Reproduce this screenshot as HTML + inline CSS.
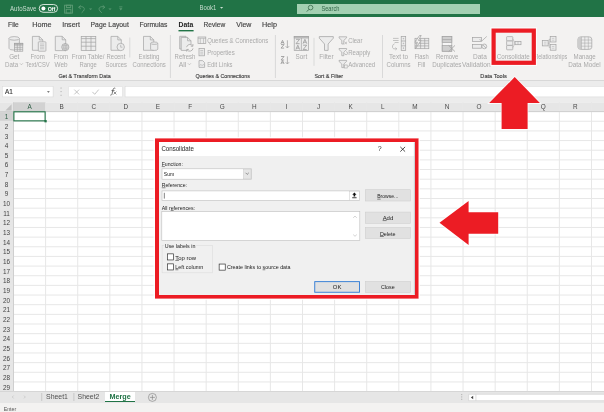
<!DOCTYPE html>
<html><head><meta charset="utf-8"><style>
html,body{margin:0;padding:0;width:604px;height:412px;overflow:hidden;background:#fff}
#w{position:absolute;left:0;top:0;width:604px;height:412px;overflow:hidden;will-change:transform;filter:blur(0.3px);font-family:"Liberation Sans", sans-serif}
.ov{position:absolute;left:0;top:0;overflow:visible}
</style></head><body><div id="w">
<div style="position:absolute;left:0px;top:0px;width:604px;height:17px;background:#217346"></div>
<div style="position:absolute;left:297.4px;top:3.5px;width:183px;height:10.5px;background:#a3d0b2"></div>
<svg class="ov" width="604" height="412" viewBox="0 0 604 412"><text x="10.00" y="10.96" font-family="Liberation Sans" font-size="6.6" fill="#c9ddd0" textLength="26.39" lengthAdjust="spacingAndGlyphs">AutoSave</text><rect x="39.2" y="4.5" width="18.4" height="7.8" rx="3.9" fill="none" stroke="#e6efe9" stroke-width="0.9"/><circle cx="43.4" cy="8.4" r="2" fill="#fff"/><text x="47.66" y="10.50" font-family="Liberation Sans" font-size="5.6" fill="#fff" font-weight="bold" textLength="7.67" lengthAdjust="spacingAndGlyphs">Off</text><g fill="none" stroke="#5c9a74" stroke-width="0.9"><rect x="64.6" y="5.2" width="7.9" height="7.9"/><rect x="66.4" y="5.2" width="4.3" height="2.3"/><rect x="66.2" y="9.3" width="4.7" height="3.8"/><path d="M78.8 7.2 C 82.5 5.4, 87.5 8.2, 81.6 12.8"/><path d="M80.6 5.4 L78.6 7.3 L80.8 8.9"/><path d="M104.6 7.2 C 100.9 5.4, 95.9 8.2, 101.8 12.8"/><path d="M102.8 5.4 L104.8 7.3 L102.6 8.9"/></g><g fill="#5c9a74"><path d="M89 8.6 h3.2 l-1.6 1.5z"/><path d="M108.4 8.6 h3.2 l-1.6 1.5z"/><path d="M119.2 8.2 h3.2 l-1.6 2.2z"/><rect x="119.2" y="6.5" width="3.2" height="0.8"/></g><text x="199.50" y="10.16" font-family="Liberation Sans" font-size="6.6" fill="#c9ddd0" textLength="16.89" lengthAdjust="spacingAndGlyphs">Book1</text><path d="M220 7 h3.2 l-1.6 1.8z" fill="#c9ddd0"/><circle cx="310.6" cy="7.6" r="2.3" fill="none" stroke="#3b6b4c" stroke-width="0.8"/><path d="M309 9.3 L306.8 11.6" stroke="#3b6b4c" stroke-width="0.9"/><text x="321.40" y="11.26" font-family="Liberation Sans" font-size="6.6" fill="#33684a" textLength="17.99" lengthAdjust="spacingAndGlyphs">Search</text></svg>
<div style="position:absolute;left:0px;top:17px;width:604px;height:63px;background:#f3f2f1"></div>
<svg style="position:absolute;left:0;top:0" width="604" height="100" viewBox="0 0 604 100"><g fill="#ececec" stroke="#a3a3a3" stroke-width="0.7"><path d="M9 38.4 V48.3 A5.2 1.8 0 0 0 19.4 48.3 V38.4"/><ellipse cx="14.2" cy="38.4" rx="5.2" ry="1.8"/></g><g stroke="#a3a3a3" stroke-width="0.7"><rect x="14.5" y="43.3" width="8.3" height="7.9" fill="#ececec"/><rect x="14.5" y="43.3" width="8.3" height="1.8" fill="#c4c4c4"/><path d="M17.3 43.3 V51.2 M20 43.3 V51.2 M14.5 47.3 H22.8 M14.5 49.3 H22.8" fill="none"/></g><g fill="#ececec" stroke="#a3a3a3" stroke-width="0.7"><path d="M32.4 36.4 H39.3 L42.8 39.9 V50.3 H32.4 Z"/><path d="M39.3 36.4 V39.9 H42.8" fill="none"/><rect x="38.3" y="41.8" width="7.6" height="9.4" rx="0.6"/><path d="M40 44 H44.2 M40 45.6 H44.2 M40 47.2 H44.2 M40 48.8 H44.2" fill="none" stroke-width="0.5"/></g><g fill="#ececec" stroke="#a3a3a3" stroke-width="0.7"><path d="M55.3 36.3 H62.2 L65.7 39.8 V50.6 H55.3 Z"/><path d="M62.2 36.3 V39.8 H65.7" fill="none"/><circle cx="65.3" cy="47.1" r="3.6"/><path d="M61.7 47.1 H68.9 M65.3 43.5 V50.7 M62.2 45.4 H68.4 M62.2 48.8 H68.4" fill="none" stroke-width="0.5"/><ellipse cx="65.3" cy="47.1" rx="1.6" ry="3.6" fill="none" stroke-width="0.5"/></g><g stroke="#a3a3a3" stroke-width="0.7" fill="none"><rect x="81.2" y="36.4" width="14.6" height="14.2" fill="#ececec"/><path d="M81.2 38.6 H95.8 M81.2 42.2 H95.8 M81.2 46.2 H95.8 M86 36.4 V50.6 M91 36.4 V50.6"/></g><g fill="#ececec" stroke="#a3a3a3" stroke-width="0.7"><path d="M111 36.4 H117.8 L121.3 39.9 V50.3 H111 Z"/><path d="M117.8 36.4 V39.9 H121.3" fill="none"/><circle cx="120.7" cy="47" r="3.7"/><path d="M120.7 44.8 V47.2 H122.5" fill="none" stroke-width="0.6"/></g><g fill="#ececec" stroke="#a3a3a3" stroke-width="0.7"><path d="M143.5 36.4 H150.3 L153.8 39.9 V50.3 H143.5 Z"/><path d="M150.3 36.4 V39.9 H153.8" fill="none"/><path d="M150.6 43.2 V49.2 A3.6 1.2 0 0 0 157.8 49.2 V43.2"/><ellipse cx="154.2" cy="43.2" rx="3.6" ry="1.2"/></g><g fill="#ececec" stroke="#a3a3a3" stroke-width="0.7"><path d="M179.7 36.3 H186 V49 H179.7 Z" fill="#e2e2e2"/><path d="M181.2 37.4 H187.6 L191 40.8 V50.4 H181.2 Z"/><path d="M187.6 37.4 V40.8 H191" fill="none"/></g><circle cx="189.8" cy="47.8" r="3.9" fill="#f3f2f1"/><g fill="none" stroke="#a3a3a3" stroke-width="0.8"><path d="M186.6 47.2 A3.3 3.3 0 0 1 192.6 45.9"/><path d="M193 48.4 A3.3 3.3 0 0 1 187 49.7"/><path d="M192.9 44 V46.2 H190.8"/><path d="M186.7 51.6 V49.4 H188.8"/></g><g fill="#ececec" stroke="#a3a3a3" stroke-width="0.7"><rect x="198" y="37" width="7.8" height="6.4"/><path d="M198 38.4 H205.8 M200.3 38.4 V43.4 M203.5 38.4 V43.4" fill="none" stroke-width="0.5"/><rect x="199" y="48.4" width="5.5" height="7.4"/><path d="M200.3 50.5 H203.2 M200.3 52.2 H203.2 M200.3 53.9 H203.2" fill="none" stroke-width="0.5"/><path d="M199 60.6 H202.6 L204.6 62.6 V67.4 H199 Z"/><path d="M199.8 65.6 a1 1 0 0 1 2 0 M202.4 65.6 a1 1 0 0 1 2 0" fill="none" stroke-width="0.5"/></g><g fill="none" stroke="#a3a3a3" stroke-width="0.8"><path d="M287.4 40.3 V48 M285.7 46.2 L287.4 48 L289.1 46.2"/><path d="M287.4 56.4 V64 M285.7 62.2 L287.4 64 L289.1 62.2"/></g><path d="M280.9 43.8 L282.5 40.3 L284.09999999999997 43.8 M281.5 42.599999999999994 H283.5 M281 44.6 H284.1 L281 48.1 H284.1 M281 56.5 H284.1 L281 60.0 H284.1 M280.9 64.0 L282.5 60.5 L284.09999999999997 64.0 M281.5 62.8 H283.5" fill="none" stroke="#9a9a9a" stroke-width="0.85"/><g fill="#ececec" stroke="#a3a3a3" stroke-width="0.7"><rect x="294.2" y="36.5" width="14.4" height="14"/><rect x="294.2" y="36.5" width="14.4" height="1.5" fill="#c8c8c8"/><path d="M301.4 38 V50.5" fill="none"/></g><path d="M296 39.3 H299.6 L296 43.699999999999996 H299.6 M295.9 49.6 L297.79999999999995 45.2 L299.7 49.6 M296.59999999999997 48.104000000000006 H299.0 M303 43.699999999999996 L304.9 39.3 L306.8 43.699999999999996 M303.7 42.204 H306.1 M303.1 45.2 H306.70000000000005 L303.1 49.6 H306.70000000000005" fill="none" stroke="#9a9a9a" stroke-width="0.8"/><g fill="#ececec" stroke="#a3a3a3" stroke-width="0.75"><path d="M319.3 36.6 H333.3 V38.2 L328.1 44 V50.4 H324.5 V44 L319.3 38.2 Z"/></g><g fill="#ececec" stroke="#a3a3a3" stroke-width="0.7"><path d="M339 36.8 H346.6 V37.8 L343.8 40.4 V44.0 H341.8 V40.4 L339 37.8 Z"/></g><g fill="#ececec" stroke="#a3a3a3" stroke-width="0.7"><path d="M339 48.5 H346.6 V49.5 L343.8 52.1 V55.7 H341.8 V52.1 L339 49.5 Z"/></g><g fill="#ececec" stroke="#a3a3a3" stroke-width="0.7"><path d="M339 60.4 H346.6 V61.4 L343.8 64.0 V67.6 H341.8 V64.0 L339 61.4 Z"/></g><g fill="none" stroke="#a3a3a3" stroke-width="0.6"><path d="M344.6 41.8 l2.4 2.4 M347 41.8 l-2.4 2.4"/><path d="M344.6 53.2 a1.5 1.5 0 1 0 1.5 -1.5"/><rect x="344.2" y="65" width="3" height="3"/></g><g fill="none" stroke="#a3a3a3" stroke-width="0.6"><path d="M393 38.4 H398.6 M393 40.5 H398.6 M394.6 42.5 H398.6"/><path d="M394.6 43.8 A2.8 2.8 0 0 0 393.6 48.8 H396.6 M395.4 47.6 L396.8 48.8 L395.4 50"/></g><g fill="#ececec" stroke="#a3a3a3" stroke-width="0.7"><rect x="401.2" y="36.4" width="4.5" height="14"/><path d="M401.2 41 H405.7 M401.2 45.8 H405.7" fill="none"/><circle cx="403.45" cy="38.7" r="0.35"/><circle cx="403.45" cy="43.4" r="0.35"/><circle cx="403.45" cy="48.1" r="0.35"/></g><g stroke="#a3a3a3" stroke-width="0.7" fill="#ececec"><rect x="415" y="38.3" width="13.8" height="10.4"/><path d="M415 40.8 H428.8 M415 43.3 H428.8 M415 45.9 H428.8 M420.6 38.3 V48.7 M424.7 38.3 V48.7" fill="none"/><path d="M419.6 35.5 L414.9 42.2 H417.4 L415.5 48.6 L421 40.4 H418.4 L421.2 35.5 Z" fill="#f3f2f1" stroke-width="0.75"/></g><g stroke="#a3a3a3" stroke-width="0.7"><rect x="442.2" y="36.6" width="9.6" height="14.6" fill="#f6f6f6"/><rect x="442.2" y="36.6" width="9.6" height="6" fill="#cfcfcf"/><rect x="442.2" y="45.6" width="9.6" height="5.6" fill="#cfcfcf"/><path d="M442.2 39.6 H451.8" fill="none"/><path d="M448.6 45.4 L455 51.6 M455 45.4 L448.6 51.6" fill="none" stroke-width="0.8"/></g><g stroke="#a3a3a3" stroke-width="0.7" fill="#ececec"><rect x="472.4" y="37.6" width="9.2" height="3.8"/><rect x="472.4" y="44.4" width="9.2" height="3.8"/><path d="M479.6 39.2 L481.6 41.2 L486.8 36.4" fill="none"/><circle cx="484.3" cy="46.4" r="2.4"/><path d="M482.6 44.7 L486 48.1" fill="none"/></g><g stroke="#a3a3a3" stroke-width="0.7" fill="#ececec"><rect x="506.6" y="36.6" width="6.2" height="4.4" rx="0.6"/><rect x="506.6" y="41" width="6.2" height="4.4" rx="0.6"/><rect x="506.6" y="45.4" width="6.2" height="4.4" rx="0.6"/><rect x="515" y="41.5" width="6" height="3.2"/><path d="M518 41.5 V44.7" fill="none" stroke-width="0.5"/><path d="M512.8 38.8 L515 43.1 L512.8 47.6" fill="none" stroke-width="0.5"/></g><g stroke="#a3a3a3" stroke-width="0.7" fill="#ececec"><rect x="542.3" y="40.5" width="5.8" height="5.4"/><rect x="550.2" y="36.6" width="5.8" height="5.4"/><rect x="550.2" y="44.6" width="5.8" height="5.6"/><path d="M548.1 43.2 H549.2 M549.2 39.3 V47.4 M549.2 39.3 H550.2 M549.2 47.4 H550.2" fill="none" stroke-width="0.6"/><path d="M544 42.2 H546.4 M544 44 H546.4 M551.9 38.4 H554.3 M551.9 40.2 H554.3 M551.9 46.5 H554.3 M551.9 48.3 H554.3" fill="none" stroke-width="0.4"/></g><g stroke="#a3a3a3" stroke-width="0.7"><path d="M577.9 39.2 Q577.9 36.8 581.2 36.8 H588.8 Q591.8 36.8 591.8 39.2 V47.2 Q591.8 49.4 588.8 49.4 H581.2 Q577.9 49.4 577.9 47.2 Z" fill="#ededed"/><path d="M581.4 36.9 Q578 36.9 578 39.2 V47.2 Q578 49.3 581.4 49.3 Z" fill="#cdcdcd" stroke="none"/><path d="M581.4 36.8 V49.4 M584.8 36.8 V49.4 M588.3 36.8 V49.4 M581.4 40 H591.8 M581.4 43.1 H591.8 M581.4 46.2 H591.8" fill="none" stroke-width="0.5"/></g></svg>
<svg class="ov" width="604" height="412" viewBox="0 0 604 412"><text x="8.09" y="27.43" font-family="Liberation Sans" font-size="6.8" fill="#444" stroke="#444" stroke-width="0.14" textLength="10.72" lengthAdjust="spacingAndGlyphs">File</text><text x="32.39" y="27.43" font-family="Liberation Sans" font-size="6.8" fill="#444" stroke="#444" stroke-width="0.14" textLength="19.22" lengthAdjust="spacingAndGlyphs">Home</text><text x="62.19" y="27.43" font-family="Liberation Sans" font-size="6.8" fill="#444" stroke="#444" stroke-width="0.14" textLength="17.72" lengthAdjust="spacingAndGlyphs">Insert</text><text x="90.59" y="27.43" font-family="Liberation Sans" font-size="6.8" fill="#444" stroke="#444" stroke-width="0.14" textLength="38.22" lengthAdjust="spacingAndGlyphs">Page Layout</text><text x="139.39" y="27.43" font-family="Liberation Sans" font-size="6.8" fill="#444" stroke="#444" stroke-width="0.14" textLength="28.02" lengthAdjust="spacingAndGlyphs">Formulas</text><text x="178.59" y="27.43" font-family="Liberation Sans" font-size="6.8" fill="#1f1f1f" font-weight="bold" textLength="14.82" lengthAdjust="spacingAndGlyphs">Data</text><text x="203.59" y="27.43" font-family="Liberation Sans" font-size="6.8" fill="#444" stroke="#444" stroke-width="0.14" textLength="21.62" lengthAdjust="spacingAndGlyphs">Review</text><text x="236.39" y="27.43" font-family="Liberation Sans" font-size="6.8" fill="#444" stroke="#444" stroke-width="0.14" textLength="15.02" lengthAdjust="spacingAndGlyphs">View</text><text x="262.09" y="27.43" font-family="Liberation Sans" font-size="6.8" fill="#444" stroke="#444" stroke-width="0.14" textLength="14.82" lengthAdjust="spacingAndGlyphs">Help</text><rect x="178.5" y="30" width="15.1" height="1.4" fill="#217346"/><text x="9.20" y="58.96" font-family="Liberation Sans" font-size="6.6" fill="#a9a9a9" textLength="10.19" lengthAdjust="spacingAndGlyphs">Get</text><text x="5.05" y="67.06" font-family="Liberation Sans" font-size="6.6" fill="#a9a9a9" textLength="13.04" lengthAdjust="spacingAndGlyphs">Data</text><path d="M19.9 63.3 l1.5 1.5 l1.5 -1.5" fill="none" stroke="#a9a9a9" stroke-width="0.6"/><text x="30.60" y="58.96" font-family="Liberation Sans" font-size="6.6" fill="#a9a9a9" textLength="14.19" lengthAdjust="spacingAndGlyphs">From</text><text x="25.60" y="67.06" font-family="Liberation Sans" font-size="6.6" fill="#a9a9a9" textLength="24.09" lengthAdjust="spacingAndGlyphs">Text/CSV</text><text x="53.80" y="58.96" font-family="Liberation Sans" font-size="6.6" fill="#a9a9a9" textLength="14.39" lengthAdjust="spacingAndGlyphs">From</text><text x="54.60" y="67.06" font-family="Liberation Sans" font-size="6.6" fill="#a9a9a9" textLength="12.99" lengthAdjust="spacingAndGlyphs">Web</text><text x="71.80" y="58.96" font-family="Liberation Sans" font-size="6.6" fill="#a9a9a9" textLength="32.59" lengthAdjust="spacingAndGlyphs">From Table/</text><text x="79.60" y="67.06" font-family="Liberation Sans" font-size="6.6" fill="#a9a9a9" textLength="17.29" lengthAdjust="spacingAndGlyphs">Range</text><text x="106.60" y="58.96" font-family="Liberation Sans" font-size="6.6" fill="#a9a9a9" textLength="18.69" lengthAdjust="spacingAndGlyphs">Recent</text><text x="105.60" y="67.06" font-family="Liberation Sans" font-size="6.6" fill="#a9a9a9" textLength="21.29" lengthAdjust="spacingAndGlyphs">Sources</text><text x="138.60" y="58.96" font-family="Liberation Sans" font-size="6.6" fill="#a9a9a9" textLength="20.79" lengthAdjust="spacingAndGlyphs">Existing</text><text x="132.60" y="67.06" font-family="Liberation Sans" font-size="6.6" fill="#a9a9a9" textLength="33.19" lengthAdjust="spacingAndGlyphs">Connections</text><text x="174.60" y="58.96" font-family="Liberation Sans" font-size="6.6" fill="#a9a9a9" textLength="20.79" lengthAdjust="spacingAndGlyphs">Refresh</text><text x="178.80" y="67.06" font-family="Liberation Sans" font-size="6.6" fill="#a9a9a9" textLength="7.59" lengthAdjust="spacingAndGlyphs">All</text><path d="M187.9 63.3 l1.5 1.5 l1.5 -1.5" fill="none" stroke="#a9a9a9" stroke-width="0.6"/><text x="207.20" y="42.56" font-family="Liberation Sans" font-size="6.6" fill="#a9a9a9" textLength="60.99" lengthAdjust="spacingAndGlyphs">Queries &amp; Connections</text><text x="207.20" y="54.86" font-family="Liberation Sans" font-size="6.6" fill="#a9a9a9" textLength="27.49" lengthAdjust="spacingAndGlyphs">Properties</text><text x="207.20" y="66.86" font-family="Liberation Sans" font-size="6.6" fill="#a9a9a9" textLength="25.29" lengthAdjust="spacingAndGlyphs">Edit Links</text><text x="295.50" y="58.96" font-family="Liberation Sans" font-size="6.6" fill="#a9a9a9" textLength="11.69" lengthAdjust="spacingAndGlyphs">Sort</text><text x="319.30" y="58.96" font-family="Liberation Sans" font-size="6.6" fill="#a9a9a9" textLength="14.29" lengthAdjust="spacingAndGlyphs">Filter</text><text x="348.20" y="42.66" font-family="Liberation Sans" font-size="6.6" fill="#a9a9a9" textLength="14.19" lengthAdjust="spacingAndGlyphs">Clear</text><text x="348.20" y="54.86" font-family="Liberation Sans" font-size="6.6" fill="#a9a9a9" textLength="22.19" lengthAdjust="spacingAndGlyphs">Reapply</text><text x="348.20" y="67.16" font-family="Liberation Sans" font-size="6.6" fill="#a9a9a9" textLength="26.99" lengthAdjust="spacingAndGlyphs">Advanced</text><text x="389.10" y="58.96" font-family="Liberation Sans" font-size="6.6" fill="#a9a9a9" textLength="19.09" lengthAdjust="spacingAndGlyphs">Text to</text><text x="386.60" y="67.06" font-family="Liberation Sans" font-size="6.6" fill="#a9a9a9" textLength="23.99" lengthAdjust="spacingAndGlyphs">Columns</text><text x="414.40" y="58.96" font-family="Liberation Sans" font-size="6.6" fill="#a9a9a9" textLength="14.29" lengthAdjust="spacingAndGlyphs">Flash</text><text x="417.60" y="67.06" font-family="Liberation Sans" font-size="6.6" fill="#a9a9a9" textLength="7.79" lengthAdjust="spacingAndGlyphs">Fill</text><text x="435.90" y="58.96" font-family="Liberation Sans" font-size="6.6" fill="#a9a9a9" textLength="22.59" lengthAdjust="spacingAndGlyphs">Remove</text><text x="432.30" y="67.06" font-family="Liberation Sans" font-size="6.6" fill="#a9a9a9" textLength="29.19" lengthAdjust="spacingAndGlyphs">Duplicates</text><text x="473.00" y="58.96" font-family="Liberation Sans" font-size="6.6" fill="#a9a9a9" textLength="13.79" lengthAdjust="spacingAndGlyphs">Data</text><text x="462.10" y="67.06" font-family="Liberation Sans" font-size="6.6" fill="#a9a9a9" textLength="28.59" lengthAdjust="spacingAndGlyphs">Validation</text><text x="496.80" y="58.96" font-family="Liberation Sans" font-size="6.6" fill="#a9a9a9" textLength="32.89" lengthAdjust="spacingAndGlyphs">Consolidate</text><text x="534.40" y="58.96" font-family="Liberation Sans" font-size="6.6" fill="#a9a9a9" textLength="32.79" lengthAdjust="spacingAndGlyphs">Relationships</text><text x="573.60" y="58.96" font-family="Liberation Sans" font-size="6.6" fill="#a9a9a9" textLength="22.09" lengthAdjust="spacingAndGlyphs">Manage</text><text x="568.30" y="67.06" font-family="Liberation Sans" font-size="6.6" fill="#a9a9a9" textLength="32.29" lengthAdjust="spacingAndGlyphs">Data Model</text><text x="58.45" y="78.18" font-family="Liberation Sans" font-size="5.8" fill="#3d3d3d" stroke="#3d3d3d" stroke-width="0.14" textLength="52.20" lengthAdjust="spacingAndGlyphs">Get &amp; Transform Data</text><text x="195.45" y="78.18" font-family="Liberation Sans" font-size="5.8" fill="#3d3d3d" stroke="#3d3d3d" stroke-width="0.14" textLength="54.40" lengthAdjust="spacingAndGlyphs">Queries &amp; Connections</text><text x="314.45" y="78.18" font-family="Liberation Sans" font-size="5.8" fill="#3d3d3d" stroke="#3d3d3d" stroke-width="0.14" textLength="28.50" lengthAdjust="spacingAndGlyphs">Sort &amp; Filter</text><text x="480.35" y="78.18" font-family="Liberation Sans" font-size="5.8" fill="#3d3d3d" stroke="#3d3d3d" stroke-width="0.14" textLength="26.40" lengthAdjust="spacingAndGlyphs">Data Tools</text><rect x="129.3" y="37.5" width="1" height="20.0" fill="#d9d9d9"/><rect x="169.9" y="35" width="1" height="43" fill="#d9d9d9"/><rect x="274.9" y="35" width="1" height="43" fill="#d9d9d9"/><rect x="313.5" y="37.8" width="1" height="28.0" fill="#d9d9d9"/><rect x="382.0" y="35" width="1" height="43" fill="#d9d9d9"/></svg>
<div style="position:absolute;left:0px;top:79.6px;width:604px;height:1.6px;background:#d8d8d8"></div>
<div style="position:absolute;left:0px;top:81.2px;width:604px;height:21.2px;background:#ececec"></div>
<div style="position:absolute;left:2.2px;top:86px;width:51.2px;height:11.2px;background:#fff"></div>
<div style="position:absolute;left:68.4px;top:86px;width:54.3px;height:11.2px;background:#fff"></div>
<div style="position:absolute;left:124.8px;top:86px;width:480px;height:11.2px;background:#fff"></div>
<svg class="ov" width="604" height="412" viewBox="0 0 604 412"><g fill="none" stroke="#d9d9d9" stroke-width="0.6"><rect x="2.5" y="86.3" width="50.6" height="10.6"/><rect x="68.7" y="86.3" width="53.7" height="10.6"/><rect x="125.1" y="86.3" width="480" height="10.6"/></g><text x="5.00" y="94.16" font-family="Liberation Sans" font-size="6.6" fill="#333" stroke="#333" stroke-width="0.12" textLength="7.89" lengthAdjust="spacingAndGlyphs">A1</text><path d="M47 91.3 h2.8 l-1.4 1.5z" fill="#555"/><g fill="#9a9a9a"><rect x="60.6" y="87.6" width="0.9" height="0.9"/><rect x="60.6" y="91.2" width="0.9" height="0.9"/><rect x="60.6" y="94.8" width="0.9" height="0.9"/></g><g stroke="#b0b0b0" stroke-width="0.75" fill="none"><path d="M74.3 89.6 l4.8 4.8 M79.1 89.6 l-4.8 4.8"/><path d="M92.4 91.9 l2.3 2.4 l4 -4.7"/></g><g stroke="#3a3a3a" stroke-width="0.7" fill="none"><path d="M115.3 88.3 C 114 87.6, 113.2 88.6, 112.9 90 L 112.1 93.8 C 111.8 95.1, 111 95.4, 110.3 95"/><path d="M111.4 90.6 H114.6" stroke-width="0.6"/><path d="M113.6 91.6 L116.4 94.4 M116.4 91.6 L113.6 94.4" stroke-width="0.55"/></g></svg>
<svg class="ov" width="604" height="412" viewBox="0 0 604 412"><rect x="0" y="102.3" width="604" height="289.3" fill="#fff"/><rect x="0" y="102.3" width="604" height="9.3" fill="#e6e6e6"/><rect x="0" y="111.6" width="13.5" height="280" fill="#e6e6e6"/><rect x="13.5" y="102.3" width="32.11" height="9.3" fill="#d2d2d2"/><rect x="0" y="111.6" width="13.5" height="9.655" fill="#d2d2d2"/><path d="M11.6 104.2 v6.2 h-6.2z" fill="#c2c2c2"/><path d="M13.50 102.3 V391.6 M45.61 102.3 V391.6 M77.72 102.3 V391.6 M109.83 102.3 V391.6 M141.94 102.3 V391.6 M174.05 102.3 V391.6 M206.16 102.3 V391.6 M238.27 102.3 V391.6 M270.38 102.3 V391.6 M302.49 102.3 V391.6 M334.60 102.3 V391.6 M366.71 102.3 V391.6 M398.82 102.3 V391.6 M430.93 102.3 V391.6 M463.04 102.3 V391.6 M495.15 102.3 V391.6 M527.26 102.3 V391.6 M559.37 102.3 V391.6 M591.48 102.3 V391.6 M0 111.60 H604 M0 121.25 H604 M0 130.91 H604 M0 140.56 H604 M0 150.22 H604 M0 159.88 H604 M0 169.53 H604 M0 179.19 H604 M0 188.84 H604 M0 198.50 H604 M0 208.15 H604 M0 217.81 H604 M0 227.46 H604 M0 237.11 H604 M0 246.77 H604 M0 256.42 H604 M0 266.08 H604 M0 275.74 H604 M0 285.39 H604 M0 295.04 H604 M0 304.70 H604 M0 314.36 H604 M0 324.01 H604 M0 333.66 H604 M0 343.32 H604 M0 352.97 H604 M0 362.63 H604 M0 372.28 H604 M0 381.94 H604 M0 391.60 H604" stroke="#e7e7e7" stroke-width="1" fill="none"/><path d="M0 111.6 H604 M13.5 102.3 V391.6" stroke="#cfcfcf" stroke-width="1" fill="none"/><text x="29.55" y="109.19" font-family="Liberation Sans" font-size="6.4" fill="#2e5e45" text-anchor="middle">A</text><text x="61.66" y="109.19" font-family="Liberation Sans" font-size="6.4" fill="#4a4a4a" text-anchor="middle">B</text><text x="93.78" y="109.19" font-family="Liberation Sans" font-size="6.4" fill="#4a4a4a" text-anchor="middle">C</text><text x="125.88" y="109.19" font-family="Liberation Sans" font-size="6.4" fill="#4a4a4a" text-anchor="middle">D</text><text x="158.00" y="109.19" font-family="Liberation Sans" font-size="6.4" fill="#4a4a4a" text-anchor="middle">E</text><text x="190.11" y="109.19" font-family="Liberation Sans" font-size="6.4" fill="#4a4a4a" text-anchor="middle">F</text><text x="222.22" y="109.19" font-family="Liberation Sans" font-size="6.4" fill="#4a4a4a" text-anchor="middle">G</text><text x="254.32" y="109.19" font-family="Liberation Sans" font-size="6.4" fill="#4a4a4a" text-anchor="middle">H</text><text x="286.44" y="109.19" font-family="Liberation Sans" font-size="6.4" fill="#4a4a4a" text-anchor="middle">I</text><text x="318.55" y="109.19" font-family="Liberation Sans" font-size="6.4" fill="#4a4a4a" text-anchor="middle">J</text><text x="350.66" y="109.19" font-family="Liberation Sans" font-size="6.4" fill="#4a4a4a" text-anchor="middle">K</text><text x="382.76" y="109.19" font-family="Liberation Sans" font-size="6.4" fill="#4a4a4a" text-anchor="middle">L</text><text x="414.88" y="109.19" font-family="Liberation Sans" font-size="6.4" fill="#4a4a4a" text-anchor="middle">M</text><text x="446.99" y="109.19" font-family="Liberation Sans" font-size="6.4" fill="#4a4a4a" text-anchor="middle">N</text><text x="479.09" y="109.19" font-family="Liberation Sans" font-size="6.4" fill="#4a4a4a" text-anchor="middle">O</text><text x="511.20" y="109.19" font-family="Liberation Sans" font-size="6.4" fill="#4a4a4a" text-anchor="middle">P</text><text x="543.31" y="109.19" font-family="Liberation Sans" font-size="6.4" fill="#4a4a4a" text-anchor="middle">Q</text><text x="575.42" y="109.19" font-family="Liberation Sans" font-size="6.4" fill="#4a4a4a" text-anchor="middle">R</text><text x="607.53" y="109.19" font-family="Liberation Sans" font-size="6.4" fill="#4a4a4a" text-anchor="middle">S</text><text x="6.60" y="119.22" font-family="Liberation Sans" font-size="6.4" fill="#2e5e45" text-anchor="middle">1</text><text x="6.60" y="128.87" font-family="Liberation Sans" font-size="6.4" fill="#444" text-anchor="middle">2</text><text x="6.60" y="138.53" font-family="Liberation Sans" font-size="6.4" fill="#444" text-anchor="middle">3</text><text x="6.60" y="148.18" font-family="Liberation Sans" font-size="6.4" fill="#444" text-anchor="middle">4</text><text x="6.60" y="157.84" font-family="Liberation Sans" font-size="6.4" fill="#444" text-anchor="middle">5</text><text x="6.60" y="167.49" font-family="Liberation Sans" font-size="6.4" fill="#444" text-anchor="middle">6</text><text x="6.60" y="177.15" font-family="Liberation Sans" font-size="6.4" fill="#444" text-anchor="middle">7</text><text x="6.60" y="186.80" font-family="Liberation Sans" font-size="6.4" fill="#444" text-anchor="middle">8</text><text x="6.60" y="196.46" font-family="Liberation Sans" font-size="6.4" fill="#444" text-anchor="middle">9</text><text x="6.60" y="206.11" font-family="Liberation Sans" font-size="6.4" fill="#444" text-anchor="middle">10</text><text x="6.60" y="215.77" font-family="Liberation Sans" font-size="6.4" fill="#444" text-anchor="middle">11</text><text x="6.60" y="225.42" font-family="Liberation Sans" font-size="6.4" fill="#444" text-anchor="middle">12</text><text x="6.60" y="235.08" font-family="Liberation Sans" font-size="6.4" fill="#444" text-anchor="middle">13</text><text x="6.60" y="244.73" font-family="Liberation Sans" font-size="6.4" fill="#444" text-anchor="middle">14</text><text x="6.60" y="254.39" font-family="Liberation Sans" font-size="6.4" fill="#444" text-anchor="middle">15</text><text x="6.60" y="264.04" font-family="Liberation Sans" font-size="6.4" fill="#444" text-anchor="middle">16</text><text x="6.60" y="273.70" font-family="Liberation Sans" font-size="6.4" fill="#444" text-anchor="middle">17</text><text x="6.60" y="283.35" font-family="Liberation Sans" font-size="6.4" fill="#444" text-anchor="middle">18</text><text x="6.60" y="293.01" font-family="Liberation Sans" font-size="6.4" fill="#444" text-anchor="middle">19</text><text x="6.60" y="302.66" font-family="Liberation Sans" font-size="6.4" fill="#444" text-anchor="middle">20</text><text x="6.60" y="312.32" font-family="Liberation Sans" font-size="6.4" fill="#444" text-anchor="middle">21</text><text x="6.60" y="321.97" font-family="Liberation Sans" font-size="6.4" fill="#444" text-anchor="middle">22</text><text x="6.60" y="331.63" font-family="Liberation Sans" font-size="6.4" fill="#444" text-anchor="middle">23</text><text x="6.60" y="341.28" font-family="Liberation Sans" font-size="6.4" fill="#444" text-anchor="middle">24</text><text x="6.60" y="350.94" font-family="Liberation Sans" font-size="6.4" fill="#444" text-anchor="middle">25</text><text x="6.60" y="360.59" font-family="Liberation Sans" font-size="6.4" fill="#444" text-anchor="middle">26</text><text x="6.60" y="370.25" font-family="Liberation Sans" font-size="6.4" fill="#444" text-anchor="middle">27</text><text x="6.60" y="379.90" font-family="Liberation Sans" font-size="6.4" fill="#444" text-anchor="middle">28</text><text x="6.60" y="389.56" font-family="Liberation Sans" font-size="6.4" fill="#444" text-anchor="middle">29</text><rect x="13.9" y="111.8" width="31.21" height="9.05" fill="none" stroke="#217346" stroke-width="1.1"/><rect x="44.41" y="120.05" width="2.3" height="2.3" fill="#217346"/></svg>
<div style="position:absolute;left:0px;top:391.6px;width:604px;height:11.8px;background:#e6e6e6"></div>
<div style="position:absolute;left:0px;top:391.4px;width:604px;height:1px;background:#d6d6d6"></div>
<div style="position:absolute;left:104.8px;top:391.6px;width:30.2px;height:9.7px;background:#fff;border-bottom:1.2px solid #217346"></div>
<svg class="ov" width="604" height="412" viewBox="0 0 604 412"><path d="M13.6 395.6 l-1.3 1.4 l1.3 1.4 M24 395.6 l1.3 1.4 l-1.3 1.4" stroke="#bbb" stroke-width="0.6" fill="none"/><rect x="41.4" y="393" width="0.8" height="8" fill="#c0c0c0"/><rect x="73.5" y="393" width="0.8" height="8" fill="#c0c0c0"/><text x="46.00" y="398.66" font-family="Liberation Sans" font-size="6.6" fill="#505050" textLength="21.99" lengthAdjust="spacingAndGlyphs">Sheet1</text><text x="77.60" y="398.66" font-family="Liberation Sans" font-size="6.6" fill="#505050" textLength="21.79" lengthAdjust="spacingAndGlyphs">Sheet2</text><text x="109.40" y="398.56" font-family="Liberation Sans" font-size="6.6" fill="#217346" font-weight="bold" textLength="21.29" lengthAdjust="spacingAndGlyphs">Merge</text><circle cx="152.4" cy="397.4" r="4" fill="none" stroke="#7a7a7a" stroke-width="0.6"/><path d="M152.4 394.9 v5 M149.9 397.4 h5" stroke="#7a7a7a" stroke-width="0.6"/><g fill="#999"><rect x="461.3" y="394.2" width="0.9" height="0.9"/><rect x="461.3" y="396.5" width="0.9" height="0.9"/><rect x="461.3" y="398.8" width="0.9" height="0.9"/></g><rect x="468.8" y="394.2" width="140" height="6.6" fill="#fff" stroke="#cfcfcf" stroke-width="0.6"/><rect x="475.6" y="394.2" width="0.7" height="6.6" fill="#cfcfcf"/><path d="M470.8 397.5 l2.4 -1.8 v3.6z" fill="#444"/></svg>
<div style="position:absolute;left:0px;top:403.4px;width:604px;height:9px;background:#f3f2f1"></div>
<svg class="ov" width="604" height="412" viewBox="0 0 604 412"><text x="3.68" y="410.73" font-family="Liberation Sans" font-size="5.4" fill="#555" textLength="12.55" lengthAdjust="spacingAndGlyphs">Enter</text></svg>
<div style="position:absolute;left:154.5px;top:138px;width:256.3px;height:152.8px;border:4.2px solid #ec1c24;background:#f0f0f0"></div>
<div style="position:absolute;left:158.7px;top:142.2px;width:256.3px;height:13.7px;background:#fff"></div>
<svg class="ov" width="604" height="412" viewBox="0 0 604 412"><text x="161.39" y="151.27" font-family="Liberation Sans" font-size="6.9" fill="#333" stroke="#333" stroke-width="0.05" textLength="32.43" lengthAdjust="spacingAndGlyphs">Consolidate</text><text x="379.60" y="151.11" font-family="Liberation Sans" font-size="7" fill="#333" text-anchor="middle">?</text><path d="M400.3 146.9 L405.1 151.6 M405.1 146.9 L400.3 151.6" stroke="#222" stroke-width="0.8"/><rect x="413.9" y="142.2" width="0.9" height="152.6" fill="#c4c9ce"/><text x="161.73" y="166.08" font-family="Liberation Sans" font-size="6.1" fill="#222" textLength="21.13" lengthAdjust="spacingAndGlyphs">Function:</text><rect x="161.73" y="166.53" width="3.14" height="0.5" fill="#222"/><rect x="162" y="168.8" width="89.3" height="10.4" fill="#fff" stroke="#bdbdbd" stroke-width="0.6"/><rect x="243.4" y="169.1" width="7.6" height="9.8" fill="#e6e6e6" stroke="#c9c9c9" stroke-width="0.5"/><path d="M245.6 172.8 l1.6 1.6 l1.6 -1.6" stroke="#555" stroke-width="0.6" fill="none"/><text x="163.73" y="176.28" font-family="Liberation Sans" font-size="6.1" fill="#222" textLength="10.53" lengthAdjust="spacingAndGlyphs">Sum</text><text x="161.73" y="187.18" font-family="Liberation Sans" font-size="6.1" fill="#222" textLength="25.23" lengthAdjust="spacingAndGlyphs">Reference:</text><rect x="161.73" y="187.63" width="3.73" height="0.5" fill="#222"/><rect x="162" y="190.9" width="197.5" height="9.5" fill="#fff" stroke="#bdbdbd" stroke-width="0.6"/><rect x="163.9" y="192.8" width="0.6" height="5.8" fill="#333"/><rect x="349.4" y="191.2" width="10" height="9" fill="#fff" stroke="#c9c9c9" stroke-width="0.5"/><path d="M354.4 192.6 l-2.1 2.2 h1.3 v1.8 h1.6 v-1.8 h1.3z" fill="#111"/><rect x="352.2" y="197.4" width="4.4" height="0.8" fill="#111"/><rect x="365.30" y="189.70" width="45.00" height="11.30" fill="#e1e1e1" stroke="#cfcfcf" stroke-width="0.6"/><text x="377.23" y="198.38" font-family="Liberation Sans" font-size="6.1" fill="#222" textLength="21.13" lengthAdjust="spacingAndGlyphs">Browse...</text><rect x="377.23" y="198.83" width="3.38" height="0.5" fill="#222"/><text x="161.73" y="209.58" font-family="Liberation Sans" font-size="6.1" fill="#222" textLength="33.33" lengthAdjust="spacingAndGlyphs">All references:</text><rect x="170.72" y="210.03" width="2.90" height="0.5" fill="#222"/><rect x="161.8" y="211.6" width="198" height="28.8" fill="#fff" stroke="#bdbdbd" stroke-width="0.6"/><g stroke="#b5b5b5" stroke-width="0.6" fill="none"><path d="M353.2 217.8 l1.8 -1.7 l1.8 1.7"/><path d="M353.2 234.6 l1.8 1.7 l1.8 -1.7"/></g><rect x="365.30" y="212.10" width="45.00" height="11.30" fill="#e1e1e1" stroke="#cfcfcf" stroke-width="0.6"/><text x="382.63" y="220.08" font-family="Liberation Sans" font-size="6.1" fill="#222" textLength="10.63" lengthAdjust="spacingAndGlyphs">Add</text><rect x="382.63" y="220.53" width="3.99" height="0.5" fill="#222"/><rect x="365.30" y="227.40" width="45.00" height="11.20" fill="#e1e1e1" stroke="#cfcfcf" stroke-width="0.6"/><text x="379.93" y="235.68" font-family="Liberation Sans" font-size="6.1" fill="#222" textLength="15.63" lengthAdjust="spacingAndGlyphs">Delete</text><rect x="379.93" y="236.13" width="3.91" height="0.5" fill="#222"/><rect x="162.1" y="245.6" width="50.2" height="27.2" fill="none" stroke="#dcdcdc" stroke-width="0.6"/><rect x="164.2" y="243" width="32" height="5" fill="#f0f0f0"/><text x="164.83" y="248.38" font-family="Liberation Sans" font-size="6.1" fill="#222" textLength="30.53" lengthAdjust="spacingAndGlyphs">Use labels in</text><rect x="167.45" y="253.85" width="6.1" height="6.1" fill="#fff" stroke="#333" stroke-width="0.7"/><text x="175.33" y="259.58" font-family="Liberation Sans" font-size="6.1" fill="#222" textLength="20.73" lengthAdjust="spacingAndGlyphs">Top row</text><rect x="175.33" y="260.03" width="3.62" height="0.5" fill="#222"/><rect x="167.45" y="263.85" width="6.1" height="6.1" fill="#fff" stroke="#333" stroke-width="0.7"/><text x="175.33" y="269.18" font-family="Liberation Sans" font-size="6.1" fill="#222" textLength="27.93" lengthAdjust="spacingAndGlyphs">Left column</text><rect x="175.33" y="269.63" width="3.01" height="0.5" fill="#222"/><rect x="219.15" y="264.05" width="6.1" height="6.1" fill="#fff" stroke="#333" stroke-width="0.7"/><text x="226.93" y="269.18" font-family="Liberation Sans" font-size="6.1" fill="#222" textLength="63.63" lengthAdjust="spacingAndGlyphs">Create links to source data</text><rect x="262.61" y="269.63" width="2.67" height="0.5" fill="#222"/><rect x="314.75" y="281.65" width="44.70" height="10.60" fill="#e1e1e1" stroke="#2b78d4" stroke-width="0.9"/><text x="332.83" y="289.38" font-family="Liberation Sans" font-size="6.1" fill="#222" textLength="8.53" lengthAdjust="spacingAndGlyphs">OK</text><rect x="365.40" y="281.50" width="45.10" height="10.90" fill="#e1e1e1" stroke="#cfcfcf" stroke-width="0.6"/><text x="381.03" y="289.38" font-family="Liberation Sans" font-size="6.1" fill="#222" textLength="13.63" lengthAdjust="spacingAndGlyphs">Close</text></svg>
<svg class="ov" width="604" height="412" viewBox="0 0 604 412"><g fill="none" stroke="#fff" stroke-width="1.6" opacity="0.8"><path d="M514.7 77.1 L539.9 103.1 H527.6 V129.1 H501.6 V103.1 H489.1 Z"/><path d="M439.5 222.8 L468.6 200.9 V212.2 H498.2 V233.7 H468.6 V245.1 Z"/><rect x="491.2" y="28.2" width="45" height="37"/><rect x="154.2" y="137.7" width="265" height="161.6"/></g><path d="M514.7 77.1 L539.9 103.1 H527.6 V129.1 H501.6 V103.1 H489.1 Z" fill="#ec1c24"/><path d="M439.5 222.8 L468.6 200.9 V212.2 H498.2 V233.7 H468.6 V245.1 Z" fill="#ec1c24"/><rect x="493.6" y="30.6" width="40.2" height="32.2" fill="none" stroke="#ec1c24" stroke-width="4.2"/></svg>
</div></body></html>
